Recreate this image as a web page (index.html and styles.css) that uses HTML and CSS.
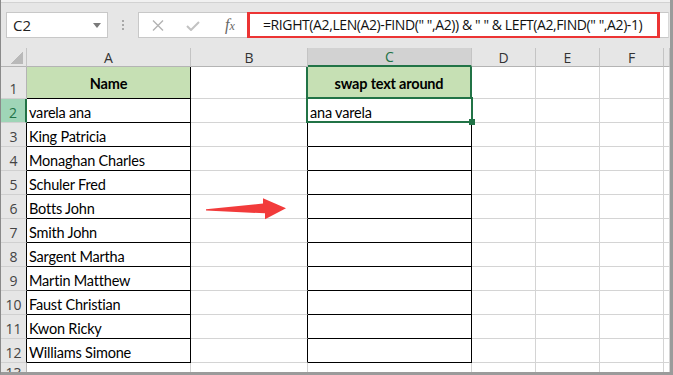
FILE: index.html
```html
<!DOCTYPE html>
<html>
<head>
<meta charset="utf-8">
<link rel="stylesheet" href="styles.css">
</head>
<body>
<div class="app">
  <div class="toolbar">
    <div class="namebox"><span class="ref">C2</span><span class="caret"></span></div>
    <div class="sep"><i></i><i></i><i></i></div>
    <div class="fbar">
      <div class="fbtns">
        <svg class="ico-x" width="12" height="11" viewBox="0 0 12 11"><path d="M1 0.5 L11 10.5 M11 0.5 L1 10.5" stroke="#b3b3b3" stroke-width="1.4" fill="none"/></svg>
        <svg class="ico-ok" width="14" height="10" viewBox="0 0 14 10"><path d="M1 5 L5 9 L13 1" stroke="#c2c2c2" stroke-width="2" fill="none"/></svg>
        <span class="fx">f<span class="fx-x">x</span></span>
      </div>
      <div class="formula">=RIGHT(A2,LEN(A2)-FIND(" ",A2)) &amp; " " &amp; LEFT(A2,FIND(" ",A2)-1)</div>
      <div class="fill"></div>
    </div>
  </div>
  <div class="grid">
    <div class="c ch corner"><span class="tri"></span></div>
    <div class="c ch">A</div>
    <div class="c ch">B</div>
    <div class="c ch sel">C</div>
    <div class="c ch">D</div>
    <div class="c ch">E</div>
    <div class="c ch">F</div>
    <div class="c ch"></div>

    <div class="c rh">1</div>
    <div class="c a hd">Name</div>
    <div class="c"></div>
    <div class="c hd c1">swap text around</div>
    <div class="c"></div><div class="c"></div><div class="c"></div><div class="c"></div>

    <div class="c rh sel">2</div>
    <div class="c a">varela ana</div>
    <div class="c bk"></div>
    <div class="c a">ana varela</div>
    <div class="c"></div><div class="c"></div><div class="c"></div><div class="c"></div>

    <div class="c rh bk">3</div>
    <div class="c a">King Patricia</div>
    <div class="c bk"></div>
    <div class="c a"></div>
    <div class="c"></div><div class="c"></div><div class="c"></div><div class="c"></div>

    <div class="c rh bk">4</div>
    <div class="c a">Monaghan Charles</div>
    <div class="c bk"></div>
    <div class="c a"></div>
    <div class="c"></div><div class="c"></div><div class="c"></div><div class="c"></div>

    <div class="c rh bk">5</div>
    <div class="c a">Schuler Fred</div>
    <div class="c bk"></div>
    <div class="c a"></div>
    <div class="c"></div><div class="c"></div><div class="c"></div><div class="c"></div>

    <div class="c rh bk">6</div>
    <div class="c a">Botts John</div>
    <div class="c bk"></div>
    <div class="c a"></div>
    <div class="c"></div><div class="c"></div><div class="c"></div><div class="c"></div>

    <div class="c rh bk">7</div>
    <div class="c a">Smith John</div>
    <div class="c bk"></div>
    <div class="c a"></div>
    <div class="c"></div><div class="c"></div><div class="c"></div><div class="c"></div>

    <div class="c rh bk">8</div>
    <div class="c a">Sargent Martha</div>
    <div class="c bk"></div>
    <div class="c a"></div>
    <div class="c"></div><div class="c"></div><div class="c"></div><div class="c"></div>

    <div class="c rh bk">9</div>
    <div class="c a">Martin Matthew</div>
    <div class="c bk"></div>
    <div class="c a"></div>
    <div class="c"></div><div class="c"></div><div class="c"></div><div class="c"></div>

    <div class="c rh bk">10</div>
    <div class="c a">Faust Christian</div>
    <div class="c bk"></div>
    <div class="c a"></div>
    <div class="c"></div><div class="c"></div><div class="c"></div><div class="c"></div>

    <div class="c rh bk">11</div>
    <div class="c a">Kwon Ricky</div>
    <div class="c bk"></div>
    <div class="c a"></div>
    <div class="c"></div><div class="c"></div><div class="c"></div><div class="c"></div>

    <div class="c rh bk">12</div>
    <div class="c a">Williams Simone</div>
    <div class="c bk"></div>
    <div class="c a"></div>
    <div class="c"></div><div class="c"></div><div class="c"></div><div class="c"></div>

    <div class="c rh top">13</div>
    <div class="c"></div><div class="c"></div><div class="c"></div>
    <div class="c"></div><div class="c"></div><div class="c"></div><div class="c"></div>
  </div>
  <svg class="arrow" width="84" height="26" viewBox="0 0 84 26">
    <polygon points="1,12.3 58,6.5 58,1.3 81,11.3 60,22.3 60,16.3 1,13.6" fill="#f23b3b"/>
  </svg>
  <div class="selection"><span class="handle"></span></div>
</div>
</body>
</html>
```
FILE: styles.css
```css
html, body {
  margin: 0;
  padding: 0;
  background: #fff;
}

.app {
  position: relative;
  width: 673px;
  height: 375px;
  box-sizing: border-box;
  border-left: 1px solid #8a8a8a;
  border-right: 3px solid #9b9b9b;
  border-bottom: 3px solid #9b9b9b;
  background: #e6e6e6;
  overflow: hidden;
  font-family: "Open Sans", "Noto Sans", sans-serif;
}

.toolbar {
  height: 48px;
  box-sizing: border-box;
  padding: 12px 1px 0 5px;
  display: flex;
  align-items: flex-start;
  background: linear-gradient(#f1f1f1 0 2px, #d2d2d2 2px 3px, #e6e6e6 3px);
}

.namebox {
  width: 102px;
  height: 26px;
  box-sizing: border-box;
  border: 1px solid #c8c8c8;
  background: #fff;
  display: flex;
  align-items: center;
  justify-content: space-between;
  padding: 0 6px 0 6px;
}

.ref {
  font-size: 15px;
  color: #222;
  line-height: 20px;
}

.caret {
  width: 0;
  height: 0;
  border-left: 4px solid transparent;
  border-right: 4px solid transparent;
  border-top: 5px solid #7a7a7a;
}

.sep {
  width: 30px;
  height: 26px;
  display: flex;
  flex-direction: column;
  align-items: center;
  justify-content: center;
  gap: 2px;
}

.sep i {
  width: 2px;
  height: 2px;
  background: #a8a8a8;
}

.fbar {
  flex: 1;
  height: 26px;
  box-sizing: border-box;
  border: 1px solid #c8c8c8;
  border-right-color: #d8d8d8;
  background: #fff;
  display: flex;
}

.fbtns {
  width: 108px;
  display: flex;
  align-items: center;
  padding-left: 13px;
  box-sizing: border-box;
}

.ico-x {
  margin-top: 1px;
}

.ico-ok {
  margin-left: 22px;
  margin-top: 1px;
}

.fx {
  margin-left: 25px;
  font-family: "Liberation Serif", serif;
  font-style: italic;
  font-size: 16px;
  color: #666;
  line-height: 16px;
}

.fx-x {
  font-size: 12px;
}

.formula {
  width: 413px;
  margin: -1px 0;
  height: 26px;
  box-sizing: border-box;
  border: 3px solid #ec3434;
  border-top-width: 2px;
  border-bottom-width: 2px;
  padding-left: 13px;
  font-size: 14px;
  letter-spacing: -0.4px;
  line-height: 21px;
  color: #111;
  white-space: nowrap;
  overflow: hidden;
}

.fill {
  flex: 1;
}

.grid {
  display: grid;
  grid-template-columns: 26px 164px 117px 164px 64px 64px 64px 6px;
  grid-template-rows: 19px 32px repeat(11, 24px) 12px;
  background: #fff;
}

.c {
  box-sizing: border-box;
  border-right: 1px solid #d4d4d4;
  border-bottom: 1px solid #d4d4d4;
  background: #fff;
  display: flex;
  align-items: flex-end;
  padding: 0 1px 0 2px;
  white-space: nowrap;
  overflow: hidden;
  font-family: Lato, "Liberation Sans", sans-serif;
  font-size: 14.5px;
  letter-spacing: -0.2px;
  line-height: 19px;
  color: #000;
}

.ch {
  background: #e6e6e6;
  border-right-color: #c4c4c4;
  border-bottom-color: #b4b4b4;
  justify-content: center;
  align-items: center;
  padding: 1px 0 0 0;
  font-family: "Open Sans", sans-serif;
  font-size: 14px;
  letter-spacing: 0;
  line-height: 18px;
  color: #333;
}

.ch.sel {
  background: #d2d2d2;
  color: #217346;
  border-bottom: 2px solid #217346;
}

.corner {
  justify-content: flex-end;
  align-items: flex-end;
  padding: 0 3px 2px 0;
}

.tri {
  width: 13px;
  height: 13px;
  background: linear-gradient(to bottom right, transparent 50%, #b9b9b9 50%);
}

.rh {
  background: #e6e6e6;
  border-right-color: #b4b4b4;
  border-bottom-color: #d0d0d0;
  justify-content: center;
  padding: 0;
  font-family: "Open Sans", sans-serif;
  font-size: 14px;
  letter-spacing: 0;
  line-height: 19px;
  color: #444;
}

.rh.sel {
  background: #9fd5b7;
  color: #217346;
  border-right: 2px solid #217346;
}

.rh.bk {
  border-right-color: #000;
}

.rh.top {
  align-items: flex-start;
}

.a {
  border-right-color: #000;
  border-bottom-color: #000;
}

.bk {
  border-right-color: #000;
}

.hd {
  background: #c6e0b4;
  font-weight: 700;
  justify-content: center;
  align-items: center;
  padding: 2px 0 0 0;
}

.c1 {
  border-right: 2px solid #217346;
  box-shadow: -2px 0 0 #217346;
}

.arrow {
  position: absolute;
  left: 204px;
  top: 197px;
}

.selection {
  position: absolute;
  left: 305px;
  top: 97px;
  width: 167px;
  height: 26px;
  box-sizing: border-box;
  border: 2px solid #217346;
}

.handle {
  position: absolute;
  right: -4px;
  bottom: -4px;
  width: 6px;
  height: 6px;
  background: #217346;
}
```
